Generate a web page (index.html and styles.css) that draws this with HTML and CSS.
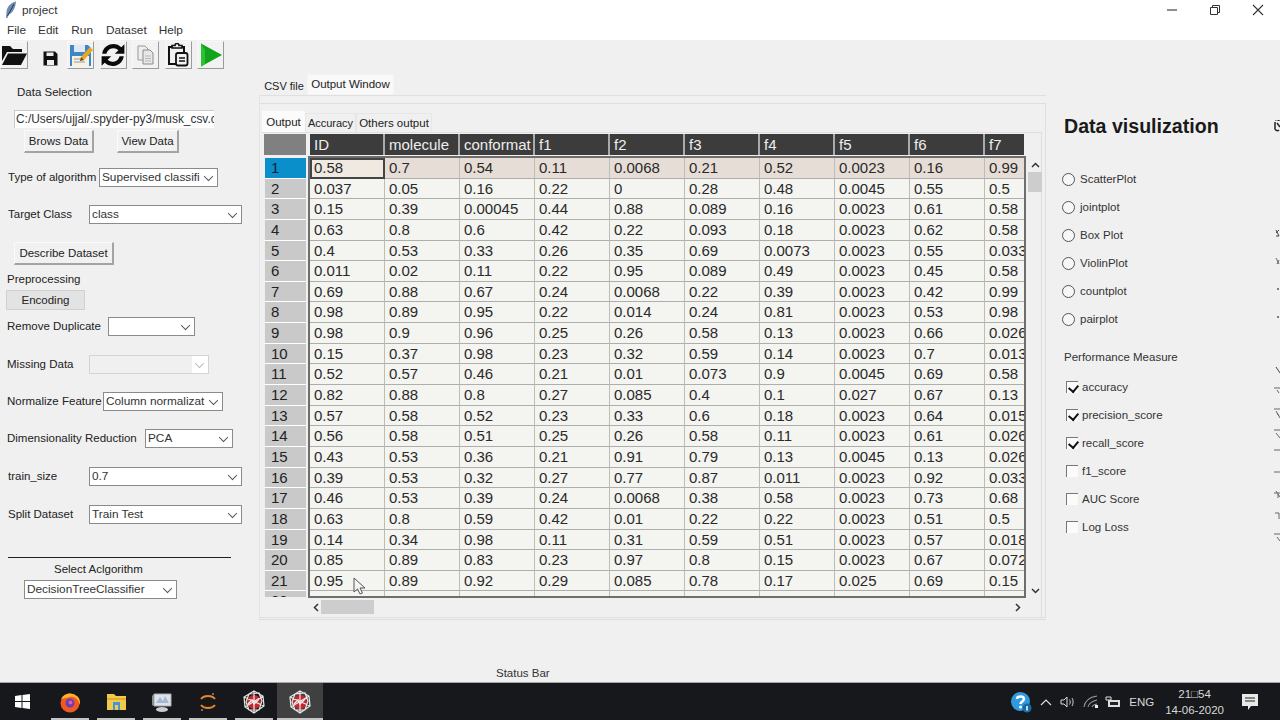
FILE: index.html
```html
<!DOCTYPE html>
<html lang="en">
<head>
<meta charset="utf-8">
<title>project</title>
<link rel="stylesheet" href="styles.css">
</head>
<body>
<div class="window">
  <header class="titlebar">
    <svg class="feather" width="12" height="18" viewBox="0 0 12 18"><path d="M11 0.500C6 1.500 1.500 6 1.500 11L1 17L2.500 17L3.500 13.500C7.500 12.500 10.500 7 11 0.500Z" fill="#6d8bb3"/><path d="M9 3L2.500 15" stroke="#26364f" stroke-width="1" fill="none"/></svg>
    <span class="title-text">project</span>
    <div class="winctl">
      <svg width="12" height="12" viewBox="0 0 12 12"><path d="M1 6H11" stroke="#444" stroke-width="1.200"/></svg>
      <svg width="12" height="12" viewBox="0 0 12 12"><path d="M1.500 3.500H8.500V10.500H1.500ZM3.500 3.500V1.500H10.500V8.500H8.500" stroke="#333" fill="none"/></svg>
      <svg width="12" height="12" viewBox="0 0 12 12"><path d="M1 1L11 11M11 1L1 11" stroke="#333" stroke-width="1.100"/></svg>
    </div>
  </header>
  <nav class="menubar"><span>File</span><span>Edit</span><span>Run</span><span>Dataset</span><span>Help</span></nav>
  <div class="toolbar">
    <button class="tool tool-open"><svg width="26" height="24" viewBox="0 0 26 24"><path d="M1 3H9L12 6H21V9H6L1 18Z" fill="#111"/><path d="M7 10.500H26L20 22H1Z" fill="#111"/></svg></button>
    <button class="tool tool-flat"><svg width="15" height="15" viewBox="0 0 15 15"><path d="M0.500 0.500H12L14.500 3V14.500H0.500Z" fill="#111"/><path d="M3.500 1.500H10.500V5H3.500Z" fill="#eee"/><path d="M4 9H11V14H4Z" fill="#eee"/></svg></button>
    <button class="tool tool-wide"><svg width="24" height="24" viewBox="0 0 24 24"><path d="M1 2H19L22 5V23H1Z" fill="#3f86c9"/><path d="M5 2H16V9H5Z" fill="#dfe9f2"/><path d="M3 13H20V23H3Z" fill="#f6f2e2"/><path d="M5 16H13M5 19H16" stroke="#999"/><path d="M21 4L24 7L15 17L11 18L12 14Z" fill="#e9a820"/><path d="M11 18L12 14L15 17Z" fill="#7b4a20"/></svg></button>
    <button class="tool tool-gap"><svg width="24" height="24" viewBox="2 2 20 20"><path d="M3 11A9.500 9.500 0 0 1 19 5.500L21.500 3V11H13.500L16.500 8A6 6 0 0 0 6.500 11Z" fill="#0b0b0b"/><path d="M21 13A9.500 9.500 0 0 1 5 18.500L2.500 21V13H10.500L7.500 16A6 6 0 0 0 17.500 13Z" fill="#0b0b0b"/></svg></button>
    <button class="tool tool-gap"><svg width="20" height="22" viewBox="0 0 20 22"><path d="M2 2H9L12 5V16H2Z" fill="#eee" stroke="#999"/><path d="M7 6H14L17 9V20H7Z" fill="#e8e8e8" stroke="#8a8a8a"/><path d="M9 12H15M9 14.500H15M9 17H15" stroke="#b5b5b5"/></svg></button>
    <button class="tool tool-gap"><svg width="22" height="24" viewBox="0 0 22 24"><path d="M5.500 4H2V21H9" fill="none" stroke="#111" stroke-width="2"/><path d="M5 5V2.500H8A2 2 0 0 1 12 2.500H15V5Z" fill="none" stroke="#111" stroke-width="1.600"/><path d="M15 4H17V9" fill="none" stroke="#111" stroke-width="2"/><rect x="9" y="10" width="11.500" height="12.500" rx="2" fill="none" stroke="#111" stroke-width="1.800"/><path d="M12 15H18M12 18H18" stroke="#111" stroke-width="1.500"/></svg></button>
    <button class="tool tool-gap"><svg width="22" height="24" viewBox="0 0 22 24"><path d="M1 0.500L22 12L1 23.500Z" fill="#12a31b"/><path d="M1 0.500L1 23.500L5 21L5 7Z" fill="#2cc235"/></svg></button>
  </div>

  <main class="main">
    <section class="left">
      <div class="line text-data">Data Selection</div>
      <div class="entry m10">C:/Users/ujjal/.spyder-py3/musk_csv.csv</div>
      <div class="btn-row m2"><button class="btn btn-browse">Brows Data</button><button class="btn btn-view">View Data</button></div>
      <div class="field m15"><label class="lab lab-type">Type of algorithm</label><div class="combo c-type">Supervised classifi</div></div>
      <div class="field m18"><label class="lab lab-std">Target Class</label><div class="combo c-std">class</div></div>
      <div class="btn-row m18"><button class="btn btn-desc">Describe Dataset</button></div>
      <div class="line text-pre m6">Preprocessing</div>
      <div class="btn-row m3"><button class="btn-plain">Encoding</button></div>
      <div class="field m7"><label class="lab lab-dup">Remove Duplicate</label><div class="combo c-dup"></div></div>
      <div class="field m19"><label class="lab lab-std2">Missing Data</label><div class="combo c-miss"></div></div>
      <div class="field m18"><label class="lab lab-norm">Normalize Feature</label><div class="combo c-norm">Column normalizat</div></div>
      <div class="field m18"><label class="lab lab-dim">Dimensionality Reduction</label><div class="combo c-dim">PCA</div></div>
      <div class="field m19"><label class="lab lab-std">train_size</label><div class="combo c-std">0.7</div></div>
      <div class="field m19"><label class="lab lab-std">Split Dataset</label><div class="combo c-std">Train Test</div></div>
      <hr class="rule">
      <div class="line text-algo m3">Select Aclgorithm</div>
      <div class="btn-row m3"><div class="combo c-algo">DecisionTreeClassifier</div></div>
    </section>

    <section class="center">
      <div class="tabs"><span class="tab tab-csv">CSV file</span><span class="tab tab-out">Output Window</span></div>
      <div class="note">
        <div class="note-inner">
          <div class="subtabs"><span class="stab stab-on">Output</span><span class="stab stab-acc">Accuracy</span><span class="stab stab-oth">Others output</span></div>
          <div class="pane">
            <div class="head">
              <div class="corner"></div>
              <div class="cols"><span>ID</span><span>molecule</span><span>conformat</span><span>f1</span><span>f2</span><span>f3</span><span>f4</span><span>f5</span><span>f6</span><span>f7</span></div>
            </div>
            <div class="body">
              <div class="rowhead">
                <span class="sel">1</span><span>2</span><span>3</span><span>4</span><span>5</span><span>6</span><span>7</span><span>8</span><span>9</span><span>10</span><span>11</span><span>12</span><span>13</span><span>14</span><span>15</span><span>16</span><span>17</span><span>18</span><span>19</span><span>20</span><span>21</span><span>22</span>
              </div>
              <div class="frame">
                <div class="tr tr-sel"><span class="cell-on">0.58</span><span>0.7</span><span>0.54</span><span>0.11</span><span>0.0068</span><span>0.21</span><span>0.52</span><span>0.0023</span><span>0.16</span><span>0.99</span></div>
                <div class="tr"><span>0.037</span><span>0.05</span><span>0.16</span><span>0.22</span><span>0</span><span>0.28</span><span>0.48</span><span>0.0045</span><span>0.55</span><span>0.5</span></div>
                <div class="tr"><span>0.15</span><span>0.39</span><span>0.00045</span><span>0.44</span><span>0.88</span><span>0.089</span><span>0.16</span><span>0.0023</span><span>0.61</span><span>0.58</span></div>
                <div class="tr"><span>0.63</span><span>0.8</span><span>0.6</span><span>0.42</span><span>0.22</span><span>0.093</span><span>0.18</span><span>0.0023</span><span>0.62</span><span>0.58</span></div>
                <div class="tr"><span>0.4</span><span>0.53</span><span>0.33</span><span>0.26</span><span>0.35</span><span>0.69</span><span>0.0073</span><span>0.0023</span><span>0.55</span><span>0.033</span></div>
                <div class="tr"><span>0.011</span><span>0.02</span><span>0.11</span><span>0.22</span><span>0.95</span><span>0.089</span><span>0.49</span><span>0.0023</span><span>0.45</span><span>0.58</span></div>
                <div class="tr"><span>0.69</span><span>0.88</span><span>0.67</span><span>0.24</span><span>0.0068</span><span>0.22</span><span>0.39</span><span>0.0023</span><span>0.42</span><span>0.99</span></div>
                <div class="tr"><span>0.98</span><span>0.89</span><span>0.95</span><span>0.22</span><span>0.014</span><span>0.24</span><span>0.81</span><span>0.0023</span><span>0.53</span><span>0.98</span></div>
                <div class="tr"><span>0.98</span><span>0.9</span><span>0.96</span><span>0.25</span><span>0.26</span><span>0.58</span><span>0.13</span><span>0.0023</span><span>0.66</span><span>0.026</span></div>
                <div class="tr"><span>0.15</span><span>0.37</span><span>0.98</span><span>0.23</span><span>0.32</span><span>0.59</span><span>0.14</span><span>0.0023</span><span>0.7</span><span>0.013</span></div>
                <div class="tr"><span>0.52</span><span>0.57</span><span>0.46</span><span>0.21</span><span>0.01</span><span>0.073</span><span>0.9</span><span>0.0045</span><span>0.69</span><span>0.58</span></div>
                <div class="tr"><span>0.82</span><span>0.88</span><span>0.8</span><span>0.27</span><span>0.085</span><span>0.4</span><span>0.1</span><span>0.027</span><span>0.67</span><span>0.13</span></div>
                <div class="tr"><span>0.57</span><span>0.58</span><span>0.52</span><span>0.23</span><span>0.33</span><span>0.6</span><span>0.18</span><span>0.0023</span><span>0.64</span><span>0.015</span></div>
                <div class="tr"><span>0.56</span><span>0.58</span><span>0.51</span><span>0.25</span><span>0.26</span><span>0.58</span><span>0.11</span><span>0.0023</span><span>0.61</span><span>0.026</span></div>
                <div class="tr"><span>0.43</span><span>0.53</span><span>0.36</span><span>0.21</span><span>0.91</span><span>0.79</span><span>0.13</span><span>0.0045</span><span>0.13</span><span>0.026</span></div>
                <div class="tr"><span>0.39</span><span>0.53</span><span>0.32</span><span>0.27</span><span>0.77</span><span>0.87</span><span>0.011</span><span>0.0023</span><span>0.92</span><span>0.033</span></div>
                <div class="tr"><span>0.46</span><span>0.53</span><span>0.39</span><span>0.24</span><span>0.0068</span><span>0.38</span><span>0.58</span><span>0.0023</span><span>0.73</span><span>0.68</span></div>
                <div class="tr"><span>0.63</span><span>0.8</span><span>0.59</span><span>0.42</span><span>0.01</span><span>0.22</span><span>0.22</span><span>0.0023</span><span>0.51</span><span>0.5</span></div>
                <div class="tr"><span>0.14</span><span>0.34</span><span>0.98</span><span>0.11</span><span>0.31</span><span>0.59</span><span>0.51</span><span>0.0023</span><span>0.57</span><span>0.018</span></div>
                <div class="tr"><span>0.85</span><span>0.89</span><span>0.83</span><span>0.23</span><span>0.97</span><span>0.8</span><span>0.15</span><span>0.0023</span><span>0.67</span><span>0.072</span></div>
                <div class="tr"><span>0.95</span><span>0.89</span><span>0.92</span><span>0.29</span><span>0.085</span><span>0.78</span><span>0.17</span><span>0.025</span><span>0.69</span><span>0.15</span></div>
                <div class="tr"><span>0.95</span><span>0.89</span><span>0.89</span><span>0.28</span><span>0.88</span><span>0.74</span><span>0.15</span><span>0.0023</span><span>0.65</span><span>0.04</span></div>
              </div>
              <div class="vscroll">
                <svg class="arrow" width="9" height="6" viewBox="0 0 9 6"><path d="M1 5L4.500 1.500L8 5" fill="none" stroke="#333" stroke-width="1.500"/></svg>
                <div class="vthumb"></div>
                <svg class="arrow arrow-down" width="9" height="6" viewBox="0 0 9 6"><path d="M1 1L4.500 4.500L8 1" fill="none" stroke="#333" stroke-width="1.500"/></svg>
              </div>
            </div>
            <div class="hscroll">
              <svg width="6" height="9" viewBox="0 0 6 9"><path d="M5 1L1.500 4.500L5 8" fill="none" stroke="#333" stroke-width="1.500"/></svg>
              <div class="hthumb"></div>
              <svg class="arrow-right" width="6" height="9" viewBox="0 0 6 9"><path d="M1 1L4.500 4.500L1 8" fill="none" stroke="#333" stroke-width="1.500"/></svg>
            </div>
            <svg class="cursor" width="13" height="18" viewBox="0 0 13 18"><path d="M1 1V15L4.500 12L7 17L9.500 16L7 11H12Z" fill="#f4f4f4" stroke="#555" stroke-width="1"/></svg>
          </div>
        </div>
      </div>
    </section>

    <aside class="right">
      <div class="right-col">
        <h2 class="viz">Data visulization</h2>
        <div class="radios">
          <div class="opt"><i class="radio"></i>ScatterPlot</div>
          <div class="opt"><i class="radio"></i>jointplot</div>
          <div class="opt"><i class="radio"></i>Box Plot</div>
          <div class="opt"><i class="radio"></i>ViolinPlot</div>
          <div class="opt"><i class="radio"></i>countplot</div>
          <div class="opt"><i class="radio"></i>pairplot</div>
        </div>
        <div class="perf">Performance Measure</div>
        <div class="checks">
          <div class="opt"><i class="check on"></i>accuracy</div>
          <div class="opt"><i class="check on"></i>precision_score</div>
          <div class="opt"><i class="check on"></i>recall_score</div>
          <div class="opt"><i class="check"></i>f1_score</div>
          <div class="opt"><i class="check"></i>AUC Score</div>
          <div class="opt"><i class="check"></i>Log Loss</div>
        </div>
      </div>
      <svg class="edge" width="6" height="440" viewBox="0 0 6 440">
        <path d="M1 0C3 -1 5 0 5 1M1 2V9C2 11 4 11 5 10M3 3L6 7" fill="none" stroke="#222" stroke-width="1.500"/>
        <path d="M2 110L5 116M5 110L2 113M2 116H5" fill="none" stroke="#444"/>
        <path d="M2 138L5 144M3 144L5 140" fill="none" stroke="#666"/>
        <path d="M4 168V170M4 196V198" fill="none" stroke="#555" stroke-width="1.500"/>
        <path d="M2 247L6 253" fill="none" stroke="#444"/>
        <path d="M0 268H6M3 270L5 273M0 289H6M2 291L5 296M3 293L6 298M0 310H6M2 313L6 318M0 330H6M0 352H6M2 371L6 377M4 374V378M0 373H6M1 393H5V399M0 414H6M3 417L6 421" fill="none" stroke="#666"/>
      </svg>
    </aside>
  </main>

  <footer class="status">Status Bar</footer>

  <div class="taskbar">
    <div class="task-start"><svg width="15" height="15" viewBox="0 0 15 15"><path d="M0 2L6.500 1V7H0ZM7.500 0.900L15 0V7H7.500ZM0 8H6.500V14L0 13ZM7.500 8H15V15L7.500 14Z" fill="#fff"/></svg></div>
    <div class="task-app"><svg width="22" height="22" viewBox="0 0 22 22"><circle cx="11" cy="12" r="9.500" fill="#f2591f"/><path d="M2 8C5 2 13 0 19 6C21 8 21.500 12 20.500 14C20 8 15 5 11 6Z" fill="#ffb22c"/><circle cx="11" cy="12" r="4.500" fill="#6b3cb8"/><circle cx="11.500" cy="11.500" r="2" fill="#d95fa8"/></svg></div>
    <div class="task-app"><svg width="21" height="18" viewBox="0 0 21 18"><path d="M1 1H8L10 3H20V17H1Z" fill="#f3c94c"/><path d="M1 5H20V7H1Z" fill="#e0ae2f"/><path d="M7 9H14V17H12V12H9V17H7Z" fill="#3d9ad6"/></svg></div>
    <div class="task-app"><svg width="22" height="22" viewBox="0 0 22 22"><path d="M3 3H20V15H3Z" fill="#dfe3e6" stroke="#aab"/><path d="M5 12L9 6L12 10L14 5L18 12Z" fill="#9fb9d6"/><path d="M1 5L3 3V15L1 14Z" fill="#8a8f94"/><ellipse cx="11" cy="18.500" rx="6" ry="2.500" fill="#c9cdd0"/></svg></div>
    <div class="task-app"><svg width="20" height="22" viewBox="0 0 20 22"><path d="M3 8C6 4 14 4 17 8" fill="none" stroke="#e8852e" stroke-width="2"/><path d="M3 14C6 18 14 18 17 14" fill="none" stroke="#e8852e" stroke-width="2"/><circle cx="4" cy="19" r="1" fill="#8f8f8f"/><circle cx="15" cy="3" r="1" fill="#8f8f8f"/></svg></div>
    <div class="task-app"><svg width="24" height="24" viewBox="0 0 24 24"><use href="#web"/></svg></div>
    <div class="task-app task-active"><svg width="24" height="24" viewBox="0 0 24 24"><defs><g id="web"><circle cx="12" cy="12" r="7" fill="#c9252c"/><path d="M6 14L10 10L12 14L17 9" fill="none" stroke="#f2f2f2" stroke-width="1.500"/><path d="M12 1L21 6L22 16L12 23L3 17L2 7ZM12 1V23M2 7L22 16M21 6L3 17M7 4L4 12L7 20L17 20L20 11L17 3Z" fill="none" stroke="#e8e8e8" stroke-width="1.200"/></g></defs><use href="#web"/></svg></div>
    <div class="tray">
      <svg class="t-help" width="22" height="22" viewBox="0 0 22 22"><circle cx="10.500" cy="10.500" r="9.500" fill="#2f9ae0"/><path d="M7 8C7 4.500 14 4.500 14 8C14 10.500 10.500 10.500 10.500 13" fill="none" stroke="#fff" stroke-width="2.500"/><circle cx="10.500" cy="16" r="1.500" fill="#fff"/><circle cx="17" cy="17" r="4.500" fill="#1769aa"/><path d="M17 15V19.500" stroke="#fff" stroke-width="1.500"/></svg>
      <svg class="t-chev" width="12" height="8" viewBox="0 0 12 8"><path d="M1 7L6 2L11 7" fill="none" stroke="#ddd" stroke-width="1.200"/></svg>
      <svg class="t-vol" width="16" height="14" viewBox="0 0 16 14"><path d="M1 5H4L7 2V12L4 9H1Z" fill="none" stroke="#ddd"/><path d="M9.500 4.500C10.500 6 10.500 8 9.500 9.500M12 3C13.500 5 13.500 9 12 11" fill="none" stroke="#ccc"/></svg>
      <svg class="t-wifi" width="16" height="14" viewBox="0 0 16 14"><path d="M1 12C2 6 7 2 14 1M5 12C5.500 9 8 6.500 14 5M9 12C9.500 10.500 11 9.500 14 9" fill="none" stroke="#999" stroke-width="1.100"/><path d="M12 10H15V13H12Z" fill="#eee"/></svg>
      <svg class="t-batt" width="16" height="12" viewBox="0 0 16 12"><path d="M3 4H15V11H3Z" fill="#ddd"/><path d="M1 1H6V4H1Z" fill="none" stroke="#ddd"/><path d="M5 6H13V9H5Z" fill="#222"/></svg>
      <span class="t-lang">ENG</span>
      <div class="t-clock"><span>21□54</span><span>14-06-2020</span></div>
      <svg class="t-note" width="18" height="18" viewBox="0 0 18 18"><path d="M1 1H17V13H10L7 17V13H1Z" fill="#e8e8e8"/><path d="M4 5H14M4 8H14" stroke="#222" stroke-width="1.200"/></svg>
    </div>
  </div>
</div>
</body>
</html>
```
FILE: styles.css
```css
* { box-sizing: border-box; }
html, body { margin: 0; padding: 0; }
body { font-family: "Liberation Sans", Arial, sans-serif; color: #222; background: #f0f0f0; }
i { font-style: normal; display: block; }
button { font: inherit; color: inherit; padding: 0; margin: 0; }

.window { width: 1280px; height: 720px; display: flex; flex-direction: column; overflow: hidden; position: relative; font-size: 11.500px; }

.titlebar { height: 20px; background: #fff; display: flex; align-items: center; padding-left: 4px; }
.feather { margin-left: 1px; }
.title-text { margin-left: 5px; font-size: 11.800px; color: #333; }
.winctl { margin-left: auto; display: flex; gap: 31px; padding-right: 16px; align-items: center; margin-top: -1px; }

.menubar { height: 20px; background: #fff; display: flex; align-items: center; padding: 0 0 0 7px; font-size: 11.800px; color: #333; gap: 13px; }
.menubar span:nth-child(2) { margin-left: -1px; }
.menubar span:nth-child(5) { margin-left: -1px; }

.toolbar { height: 30px; display: flex; align-items: center; background: #f0f0f0; }
.tool { width: 27px; height: 28px; background: #f2f2f2; border: 1px solid #f8f8f8; border-right-color: #9b9b9b; border-bottom-color: #9b9b9b; display: flex; align-items: center; justify-content: center; flex: none; }
.tool-open { width: 28px; }
.tool-flat { margin-left: 7px; border: 0; padding-top: 7px; background: #f0f0f0; width: 30px; }
.tool-wide { margin-left: 2px; }
.tool-gap { margin-left: 5.500px; }

.main { flex: 1; display: flex; min-height: 0; }
.left { width: 258px; flex: none; padding-top: 14px; display: flex; flex-direction: column; }
.line { height: 16px; display: flex; align-items: center; padding-bottom: 1px; }
.text-data { padding-left: 17px; }
.text-pre { padding-left: 7px; }
.text-algo { padding-left: 54px; }
.m2 { margin-top: 2px; } .m3 { margin-top: 3px; } .m6 { margin-top: 6px; } .m7 { margin-top: 7px; }
.m10 { margin-top: 10px; } .m15 { margin-top: 15px; } .m18 { margin-top: 18px; } .m19 { margin-top: 19px; }

.entry { height: 18px; width: 200px; margin-left: 14px; background: #fff; border-top: 1px solid #c9c9c9; border-left: 1px solid #c9c9c9; font-size: 11.900px; line-height: 17px; padding-left: 1px; white-space: nowrap; overflow: hidden; color: #333; }
.btn-row { display: flex; }
.btn { height: 23px; background: #f1f1f1; border: 1px solid #fafafa; border-right: 2px solid #a4a4a4; border-bottom: 2px solid #a4a4a4; padding-bottom: 1px; }
.btn-browse { width: 70px; margin-left: 24px; }
.btn-view { width: 62px; margin-left: 23px; }
.btn-desc { width: 100px; margin-left: 14px; }
.btn-plain { width: 79px; height: 20px; margin-left: 6px; background: #e3e3e3; border: 1px solid #d0d0d0; }

.field { display: flex; height: 19px; align-items: center; padding-left: 7px; }
.lab { flex: none; white-space: nowrap; padding-bottom: 2px; }
.lab-type { width: 92px; padding-left: 1px; }
.lab-std { width: 82px; padding-left: 1px; }
.lab-std2 { width: 82px; }
.lab-dup { width: 101px; }
.lab-norm { width: 96px; }
.lab-dim { width: 138px; }

.combo { height: 19px; background: #fff; border: 1px solid #8b8b8b; padding-left: 2px; line-height: 17px; font-size: 11.800px; white-space: nowrap; overflow: hidden; position: relative; flex: none; color: #333; }
.combo::after { content: ""; position: absolute; right: 5px; top: 4px; width: 6px; height: 6px; border-right: 1px solid #555; border-bottom: 1px solid #555; transform: rotate(45deg) scale(0.95, 0.95); }
.c-type { width: 119px; }
.c-std { width: 153px; }
.c-dup { width: 87px; }
.c-miss { width: 120px; border-color: #d4d4d4; background: linear-gradient(to right, #f0f0f0 102px, #fff 102px); }
.c-miss::after { border-color: #bbb; }
.c-norm { width: 120px; }
.c-dim { width: 88px; }
.c-algo { width: 153px; margin-left: 24px; }
.rule { height: 1px; width: 223px; border: 0; background: #222; margin: 33px 0 0 8px; flex: none; }

.center { width: 788px; flex: none; display: flex; flex-direction: column; height: 551px; padding-top: 4px; }
.tabs { height: 21px; display: flex; align-items: flex-end; padding-left: 3px; flex: none; }
.tab { display: flex; align-items: center; justify-content: center; }
.tab-csv { width: 46px; height: 17px; font-size: 11px; padding-bottom: 1px; }
.tab-out { width: 87px; height: 21px; background: #f9f9f9; border: 1px solid #f4f4f4; margin-left: 0; padding-bottom: 2px; }
.note { margin-left: 1px; width: 787px; height: 525px; border-top: 1px solid #e0e0e0; padding-top: 7px; border-left: 1px solid #e4e4e4; border-bottom: 1px solid #dcdcdc; }
.note-inner { height: 515px; border-top: 1px solid #dfdfdf; border-right: 1px solid #dfdfdf; padding: 7px 3px 0 2px; border-bottom: 1px solid #dfdfdf; }
.subtabs { height: 21px; display: flex; align-items: flex-end; }
.stab { height: 19px; display: flex; align-items: center; justify-content: center; border: 1px solid #e6e6e6; border-bottom: 0; padding-bottom: 1px; }
.stab-on { width: 43px; height: 21px; background: #fbfbfb; border: 0; padding-bottom: 0; }
.stab-acc { width: 51px; font-size: 11px; }
.stab-oth { width: 76px; }

.pane { height: 486px; width: 780px; border-top: 1px solid #dedede; border-right: 1px solid #dedede; padding: 1px 0 0 2px; position: relative; }
.head { display: flex; height: 21px; }
.corner { width: 42px; background: #808080; flex: none; }
.cols { margin-left: 4px; display: grid; grid-template-columns: repeat(9, 75px) 39px; color: #eee; font-size: 15px; }
.cols span { background: #3c3c3c; padding-left: 4px; line-height: 21px; border-right: 2px solid #aaa; overflow: hidden; white-space: nowrap; }
.cols span:last-child { border-right: 0; }
.body { display: flex; margin-top: 1px; height: 442px; font-size: 15px; }
.rowhead { width: 44px; flex: none; overflow: hidden; padding-top: 2px; height: 441px; }
.rowhead span { display: block; height: 20.650px; width: 42px; line-height: 19px; background: #c9c9c9; color: #222; padding-left: 6px; border-bottom: 1.500px solid #fff; border-left: 1px solid #eee; }
.rowhead .sel { background: #0b8fca; color: #123; }
.frame { width: 718px; flex: none; border: 2px solid #6e6e6e; overflow: hidden; background: #f4f4f0; color: #2a2a2a; margin-right: 2px; }
.tr { display: grid; grid-template-columns: repeat(9, 75px) 39px; height: 20.650px; }
.tr span { padding-left: 4px; line-height: 19px; border-right: 1px solid #bdbdb8; border-bottom: 1px solid #aeaeaa; white-space: nowrap; overflow: hidden; }
.tr span:last-child { border-right: 0; }
.tr-sel { background: #e6ddd6; }
.tr-sel .cell-on { background: #efe9e2; border: 2px solid #444; padding-left: 2px; line-height: 16px; }
.vscroll { width: 14px; flex: none; display: flex; flex-direction: column; align-items: center; padding-top: 6px; }
.arrow { display: block; flex: none; }
.vthumb { width: 14px; height: 20px; background: #cdcdcd; margin-top: 4px; }
.arrow-down { margin-top: auto; margin-bottom: 4px; }
.hscroll { display: flex; align-items: center; height: 14px; margin: 2px 0 0 49px; width: 711px; }
.hthumb { width: 53px; height: 14px; background: #cdcdcd; margin-left: 2px; }
.arrow-right { margin-left: auto; margin-right: 3px; }
.cursor { position: absolute; left: 91px; top: 444px; }

.right { flex: 1; display: flex; justify-content: space-between; height: 551px; }
.right-col { padding: 44px 0 0 18px; }
.viz { margin: 0; height: 24px; line-height: 24px; font-size: 19.600px; font-weight: bold; color: #1a1a1a; }
.radios { margin-top: 27px; }
.opt { height: 28px; display: flex; align-items: center; color: #333; }
.radio { width: 13px; height: 13px; border: 1px solid #555; border-radius: 50%; background: #f7f7f7; margin-right: 5px; margin-left: -2px; }
.perf { margin-top: 16px; height: 16px; line-height: 16px; color: #333; }
.checks { margin-top: 8px; }
.check { width: 12px; height: 12px; margin: 0 4px 0 2px; background: #fbfbfb; border-top: 1.500px solid #777; border-left: 1.500px solid #777; position: relative; }
.check.on::after { content: ""; position: absolute; left: 2.500px; top: 0.500px; width: 5px; height: 7px; border-right: 2px solid #111; border-bottom: 2px solid #111; transform: rotate(40deg); }
.edge { flex: none; margin-top: 50px; }

.status { height: 23px; line-height: 22px; padding: 2px 0 0 496px; flex: none; border-bottom: 1px solid #a6a6a6; color: #333; margin-top: -10px; }

.taskbar { height: 37px; background: #16181b; display: flex; flex: none; }
.task-start { width: 47px; display: flex; align-items: center; justify-content: center; padding-right: 2px; }
.task-app { width: 46px; display: flex; align-items: center; justify-content: center; position: relative; }
.task-app::after { content: ""; position: absolute; left: 4px; right: 4px; bottom: 0; height: 2px; background: #c4c4c4; }
.task-active { background: #404040; }
.task-active::after { left: 0; right: 0; }
.tray { margin-left: auto; display: flex; align-items: center; color: #d8d8d8; font-size: 11.500px; }
.t-help { margin-right: 8px; }
.t-chev { margin-right: 8px; }
.t-vol { margin-right: 7px; }
.t-wifi { margin-right: 6px; }
.t-batt { margin-right: 8px; }
.t-lang { margin-right: 11px; }
.t-clock { display: flex; flex-direction: column; align-items: center; line-height: 16px; margin-right: 17px; }
.t-note { margin-right: 21px; }
```
